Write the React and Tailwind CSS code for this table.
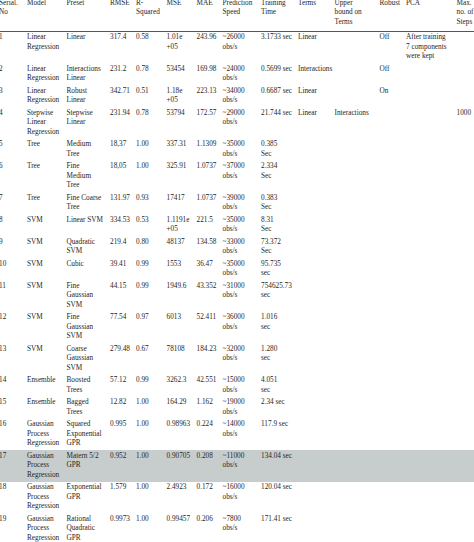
const header = [
  'Serial.\nNo',
  'Model',
  'Preset',
  'RMSE',
  'R-\nSquared',
  'MSE',
  'MAE',
  'Prediction\nSpeed',
  'Training\nTime',
  'Terms',
  'Upper\nbound on\nTerms',
  'Robust',
  'PCA',
  'Max.\nno. of\nSteps',
]

const GPR = 'Gaussian\nProcess\nRegression'
const LR = 'Linear\nRegression'

const rows = [
  ['1', LR, 'Linear', '317.4', '0.58', '1.01e\n+05', '243.96', '~26000\nobs/s', '3.1733 sec', 'Linear', '', 'Off', 'After training\n7 components\nwere kept', ''],
  ['2', LR, 'Interactions\nLinear', '231.2', '0.78', '53454', '169.98', '~24000\nobs/s', '0.5699 sec', 'Interactions', '', 'Off', '', ''],
  ['3', LR, 'Robust\nLinear', '342.71', '0.51', '1.18e\n+05', '223.13', '~34000\nobs/s', '0.6687 sec', 'Linear', '', 'On', '', ''],
  ['4', 'Stepwise\nLinear\nRegression', 'Stepwise\nLinear', '231.94', '0.78', '53794', '172.57', '~29000\nobs/s', '21.744 sec', 'Linear', 'Interactions', '', '', '1000'],
  ['5', 'Tree', 'Medium\nTree', '18,37', '1.00', '337.31', '1.1309', '~35000\nobs/s', '0.385\nSec'],
  ['6', 'Tree', 'Fine\nMedium\nTree', '18,05', '1.00', '325.91', '1.0737', '~37000\nobs/s', '2.334\nSec'],
  ['7', 'Tree', 'Fine Coarse\nTree', '131.97', '0.93', '17417', '1.0737', '~39000\nobs/s', '0.383\nSec'],
  ['8', 'SVM', 'Linear SVM', '334.53', '0.53', '1.1191e\n+05', '221.5', '~35000\nobs/s', '8.31\nSec'],
  ['9', 'SVM', 'Quadratic\nSVM', '219.4', '0.80', '48137', '134.58', '~33000\nobs/s', '73.372\nSec'],
  ['10', 'SVM', 'Cubic', '39.41', '0.99', '1553', '36.47', '~35000\nobs/s', '95.735\nsec'],
  ['11', 'SVM', 'Fine\nGaussian\nSVM', '44.15', '0.99', '1949.6', '43.352', '~31000\nobs/s', '754625.73\nsec'],
  ['12', 'SVM', 'Fine\nGaussian\nSVM', '77.54', '0.97', '6013', '52.411', '~36000\nobs/s', '1.016\nsec'],
  ['13', 'SVM', 'Coarse\nGaussian\nSVM', '279.48', '0.67', '78108', '184.23', '~32000\nobs/s', '1.280\nsec'],
  ['14', 'Ensemble', 'Boosted\nTrees', '57.12', '0.99', '3262.3', '42.551', '~15000\nobs/s', '4.051\nsec'],
  ['15', 'Ensemble', 'Bagged\nTrees', '12.82', '1.00', '164.29', '1.162', '~19000\nobs/s', '2.34 sec'],
  ['16', GPR, 'Squared\nExponential\nGPR', '0.995', '1.00', '0.98963', '0.224', '~14000\nobs/s', '117.9 sec'],
  ['17', GPR, 'Matern 5/2\nGPR', '0.952', '1.00', '0.90705', '0.208', '~11000\nobs/s', '134.04 sec'],
  ['18', GPR, 'Exponential\nGPR', '1.579', '1.00', '2.4923', '0.172', '~16000\nobs/s', '120.04 sec'],
  ['19', GPR, 'Rational\nQuadratic\nGPR', '0.9973', '1.00', '0.99457', '0.206', '~7800\nobs/s', '171.41 sec'],
]

// shared column template so header and body line up
const cols =
  'grid grid-cols-[28px_39.5px_43.5px_26px_30.5px_30px_26px_38.5px_37px_36.5px_45px_26.5px_50.5px_40px]'

function Row({ cells, highlight }) {
  const filled = [...cells, ...Array(14 - cells.length).fill('')]
  return (
    <div className={`${cols} py-[1.5px] ${highlight ? 'bg-[#c6cdcc]' : ''}`}>
      {filled.map((c, i) => (
        <div key={i} className="whitespace-pre">
          {c}
        </div>
      ))}
    </div>
  )
}

export default function App() {
  return (
    <div
      className="w-[474px] h-[542px] overflow-hidden bg-white text-[#262626] text-[7.25px] leading-[9.5px]"
      style={{ fontFamily: '"Liberation Serif", "Times New Roman", serif' }}
    >
      <div className="-ml-px -mt-[1.5px] w-[498px]">
        <div className={`${cols} pb-[3.5px] border-b border-[#555]`}>
          {header.map((h, i) => (
            <div key={i} className="whitespace-pre">
              {h}
            </div>
          ))}
        </div>
        {rows.map((r) => (
          <Row key={r[0]} cells={r} highlight={r[0] === '17'} />
        ))}
      </div>
    </div>
  )
}
